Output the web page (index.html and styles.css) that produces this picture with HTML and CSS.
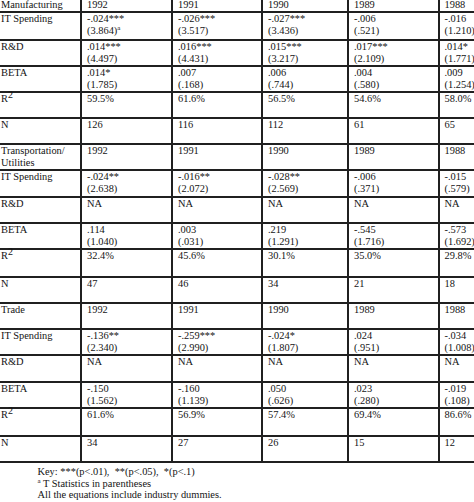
FILE: index.html
```html
<!DOCTYPE html>
<html lang="en">
<head>
<meta charset="utf-8">
<title>Regression results by industry</title>
<link rel="stylesheet" href="styles.css">
</head>
<body>
<table class="results">
  <colgroup>
    <col class="c-label"><col class="c-y1"><col class="c-y2"><col class="c-y3"><col class="c-y4"><col class="c-y5">
  </colgroup>
  <tbody>
    <tr class="head"><td>Manufacturing</td><td>1992</td><td>1991</td><td>1990</td><td>1989</td><td>1988</td></tr>
    <tr class="tall"><td>IT Spending</td><td>-.024***<br>(3.864)<sup class="fn">a</sup></td><td>-.026***<br>(3.517)</td><td>-.027***<br>(3.436)</td><td>-.006<br>(.521)</td><td>-.016<br>(1.210)</td></tr>
    <tr><td>R&amp;D</td><td>.014***<br>(4.497)</td><td>.016***<br>(4.431)</td><td>.015***<br>(3.217)</td><td>.017***<br>(2.109)</td><td>.014*<br>(1.771)</td></tr>
    <tr><td>BETA</td><td>.014*<br>(1.785)</td><td>.007<br>(.168)</td><td>.006<br>(.744)</td><td>.004<br>(.580)</td><td>.009<br>(1.254)</td></tr>
    <tr><td>R<sup class="sq">2</sup></td><td>59.5%</td><td>61.6%</td><td>56.5%</td><td>54.6%</td><td>58.0%</td></tr>
    <tr><td>N</td><td>126</td><td>116</td><td>112</td><td>61</td><td>65</td></tr>

    <tr><td>Transportation/<br>Utilities</td><td>1992</td><td>1991</td><td>1990</td><td>1989</td><td>1988</td></tr>
    <tr class="loose"><td>IT Spending</td><td>-.024**<br>(2.638)</td><td>-.016**<br>(2.072)</td><td>-.028**<br>(2.569)</td><td>-.006<br>(.371)</td><td>-.015<br>(.579)</td></tr>
    <tr><td>R&amp;D</td><td>NA</td><td>NA</td><td>NA</td><td>NA</td><td>NA</td></tr>
    <tr><td>BETA</td><td>.114<br>(1.040)</td><td>.003<br>(.031)</td><td>.219<br>(1.291)</td><td>-.545<br>(1.716)</td><td>-.573<br>(1.692)</td></tr>
    <tr class="tall"><td>R<sup class="sq">2</sup></td><td>32.4%</td><td>45.6%</td><td>30.1%</td><td>35.0%</td><td>29.8%</td></tr>
    <tr><td>N</td><td>47</td><td>46</td><td>34</td><td>21</td><td>18</td></tr>

    <tr><td>Trade</td><td>1992</td><td>1991</td><td>1990</td><td>1989</td><td>1988</td></tr>
    <tr><td>IT Spending</td><td>-.136**<br>(2.340)</td><td>-.259***<br>(2.990)</td><td>-.024*<br>(1.807)</td><td>.024<br>(.951)</td><td>-.034<br>(1.008)</td></tr>
    <tr class="loose"><td>R&amp;D</td><td>NA</td><td>NA</td><td>NA</td><td>NA</td><td>NA</td></tr>
    <tr><td>BETA</td><td>-.150<br>(1.562)</td><td>-.160<br>(1.139)</td><td>.050<br>(.626)</td><td>.023<br>(.280)</td><td>-.019<br>(.108)</td></tr>
    <tr class="tall"><td>R<sup class="sq">2</sup></td><td>61.6%</td><td>56.9%</td><td>57.4%</td><td>69.4%</td><td>86.6%</td></tr>
    <tr><td>N</td><td>34</td><td>27</td><td>26</td><td>15</td><td>12</td></tr>
  </tbody>
</table>
<div class="notes">
  <p>Key: ***(p&lt;.01),&nbsp; **(p&lt;.05),&nbsp; *(p&lt;.1)</p>
  <p><sup class="fn">a</sup> T Statistics in parentheses</p>
  <p>All the equations include industry dummies.</p>
</div>
</body>
</html>
```
FILE: styles.css
```css
html, body {
  margin: 0;
  padding: 0;
  background: #ffffff;
  overflow: hidden;
}

body {
  font-family: "Liberation Serif", "Times New Roman", serif;
  font-size: 10.4px;
  line-height: 12px;
  color: #141414;
}

.results {
  border-collapse: collapse;
  table-layout: fixed;
  width: 480.5px;
  margin: -3px 0 0 -6px;
}

.c-label { width: 86px; }
.c-y1 { width: 91px; }
.c-y2 { width: 90px; }
.c-y3 { width: 86px; }
.c-y4 { width: 90.5px; }
.c-y5 { width: 37px; }

.results td {
  border: 2px solid #202020;
  padding: 0 0 0 5px;
  vertical-align: top;
  white-space: nowrap;
  overflow: visible;
}

.results tr { height: 26px; }
.results tr.head { height: 14px; }
.results tr.loose { height: 27px; }
.results tr.tall { height: 28px; }

.fn {
  font-size: 7px;
  line-height: 0;
  vertical-align: 4px;
}

.sq {
  font-size: 10px;
  line-height: 0;
  vertical-align: 4px;
}

.notes {
  margin: 3px 0 0 37.5px;
  line-height: 11.5px;
}

.notes p {
  margin: 0;
  white-space: nowrap;
}
```
